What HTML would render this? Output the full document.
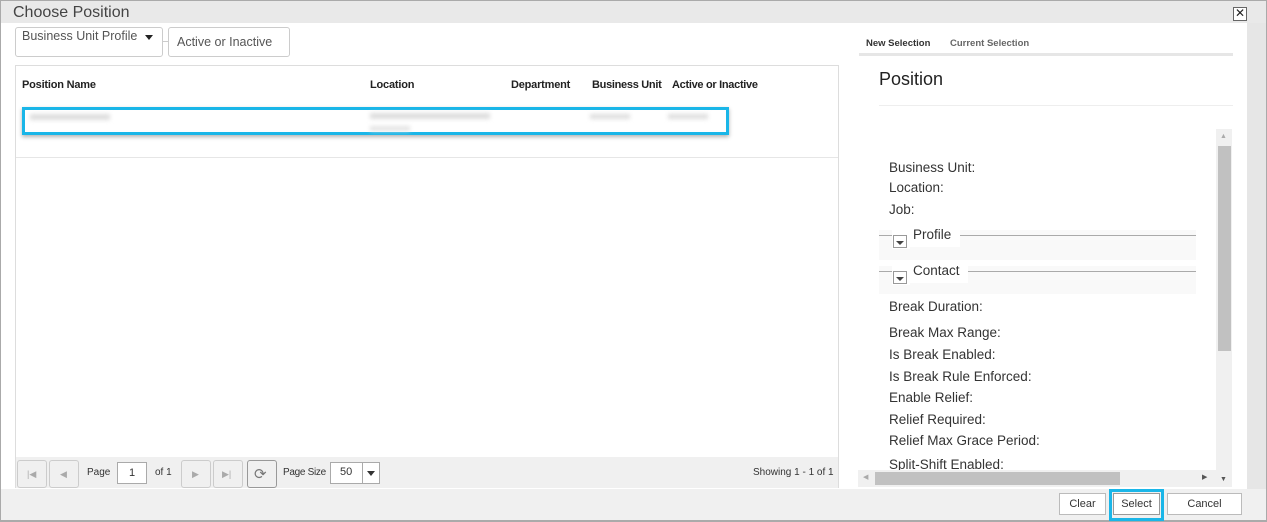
<!DOCTYPE html>
<html><head><style>
*{box-sizing:border-box;margin:0;padding:0}
body{width:1267px;height:522px;overflow:hidden;background:#f0f0f0;font-family:"Liberation Sans",sans-serif;position:relative;color:#333}
.a{position:absolute}
.lbl{position:absolute;left:889px;font-size:13.5px;color:#333}
.btn{position:absolute;border:1px solid #bbb;background:#fff;font-size:11px;text-align:center;line-height:20px;color:#333}
.pb{position:absolute;top:460px;width:30px;height:28px;border:1px solid #ccc;border-radius:3px;background:#f0f0f0}
</style></head><body>
<div class="a" style="left:0;top:0;width:1267px;height:522px;border:1px solid #aaa;border-bottom:2px solid #aaa"></div>
<div class="a" style="left:1px;top:1px;width:1265px;height:22px;background:#e9e9e9"></div>
<div class="a" style="left:13px;top:4px;font-size:16px;color:#444">Choose Position</div>
<div class="a" style="left:1233px;top:7px;width:14px;height:14px;border:1px solid #666;background:#fff;font-size:12px;line-height:11px;text-align:center;color:#222">✕</div>
<div class="a" style="left:1px;top:23px;width:1246px;height:466px;background:#fff"></div>
<div class="a" style="left:1247px;top:23px;width:19px;height:466px;background:#e6e6e6"></div>

<div class="a" style="left:15px;top:27px;width:148px;height:30px;border:1px solid #ccc;border-radius:3px"></div>
<div class="a" style="left:22px;top:29px;font-size:12.5px;color:#555">Business Unit Profile</div>
<div class="a" style="left:145px;top:35px;border-left:4px solid transparent;border-right:4px solid transparent;border-top:5px solid #222"></div>
<div class="a" style="left:163px;top:41px;width:6px;border-top:1px solid #ccc"></div>
<div class="a" style="left:168px;top:27px;width:122px;height:30px;border:1px solid #ccc;border-radius:3px"></div>
<div class="a" style="left:177px;top:35px;font-size:12.5px;color:#555">Active or Inactive</div>

<div class="a" style="left:15px;top:65px;width:824px;height:423px;border:1px solid #ddd;background:#fff"></div>
<div class="a" style="left:22px;top:79px;font-size:11px;font-weight:bold;color:#222;letter-spacing:-0.2px">Position Name</div>
<div class="a" style="left:370px;top:79px;font-size:11px;font-weight:bold;color:#222;letter-spacing:-0.2px">Location</div>
<div class="a" style="left:511px;top:79px;font-size:11px;font-weight:bold;color:#222;letter-spacing:-0.2px">Department</div>
<div class="a" style="left:592px;top:79px;font-size:11px;font-weight:bold;color:#222;letter-spacing:-0.3px">Business Unit</div>
<div class="a" style="left:672px;top:79px;font-size:11px;font-weight:bold;color:#222;letter-spacing:-0.3px">Active or Inactive</div>
<div class="a" style="left:16px;top:157px;width:822px;border-top:1px solid #e6e6e6"></div>
<div class="a" style="left:22px;top:107px;width:707px;height:28px;border:3px solid #1ab6e8;box-shadow:0 2px 4px rgba(0,0,0,.3)"></div>
<div class="a" style="left:30px;top:114px;width:80px;height:6px;background:#ddd;filter:blur(2px)"></div>
<div class="a" style="left:370px;top:113px;width:120px;height:6px;background:#ddd;filter:blur(2px)"></div>
<div class="a" style="left:370px;top:126px;width:40px;height:5px;background:#e3e3e3;filter:blur(2px)"></div>
<div class="a" style="left:590px;top:114px;width:40px;height:5px;background:#ddd;filter:blur(2px)"></div>
<div class="a" style="left:668px;top:114px;width:40px;height:5px;background:#ddd;filter:blur(2px)"></div>

<div class="a" style="left:16px;top:457px;width:822px;height:31px;background:#f0f0f0"></div>
<div class="pb" style="left:17px"><span class="a" style="left:9px;top:8px;font-size:9px;color:#aaa">|◀</span></div>
<div class="pb" style="left:49px"><span class="a" style="left:10px;top:8px;font-size:9px;color:#aaa">◀</span></div>
<div class="a" style="left:87px;top:467px;font-size:10px;color:#333">Page</div>
<div class="a" style="left:117px;top:462px;width:30px;height:22px;border:1px solid #aaa;background:#fff;font-size:11px;text-align:center;line-height:20px">1</div>
<div class="a" style="left:155px;top:467px;font-size:10px;color:#333">of 1</div>
<div class="pb" style="left:181px"><span class="a" style="left:10px;top:8px;font-size:9px;color:#aaa">▶</span></div>
<div class="pb" style="left:213px"><span class="a" style="left:8px;top:8px;font-size:9px;color:#aaa">▶|</span></div>
<div class="pb" style="left:247px;border-color:#999"><span class="a" style="left:6px;top:4px;font-size:15px;color:#777">⟳</span></div>
<div class="a" style="left:283px;top:467px;font-size:10px;color:#333;letter-spacing:-0.3px">Page Size</div>
<div class="a" style="left:330px;top:462px;width:50px;height:22px;border:1px solid #aaa;background:#fff"></div>
<div class="a" style="left:362px;top:462px;width:1px;height:22px;background:#aaa"></div>
<div class="a" style="left:340px;top:466px;font-size:11px">50</div>
<div class="a" style="left:367px;top:471px;border-left:4px solid transparent;border-right:4px solid transparent;border-top:5px solid #333"></div>
<div class="a" style="left:753px;top:467px;font-size:10px;color:#333">Showing 1 - 1 of 1</div>

<div class="a" style="left:866px;top:38px;font-size:9.5px;font-weight:bold;color:#333">New Selection</div>
<div class="a" style="left:950px;top:38px;font-size:9.5px;font-weight:bold;color:#666">Current Selection</div>
<div class="a" style="left:859px;top:53px;width:374px;height:3px;background:#e6e6e6"></div>
<div class="a" style="left:879px;top:69px;font-size:18px;color:#222">Position</div>
<div class="a" style="left:879px;top:105px;width:354px;border-top:1px solid #eee"></div>

<div class="a" style="left:1216px;top:129px;width:16px;height:358px;background:#f0f0f0"></div>
<div class="a" style="left:1218px;top:146px;width:13px;height:205px;background:#c1c1c1"></div>
<div class="a" style="left:1220px;top:133px;font-size:7px;color:#aaa">▲</div>
<div class="a" style="left:1220px;top:476px;font-size:7px;color:#555">▼</div>
<div class="a" style="left:858px;top:470px;width:358px;height:17px;background:#f0f0f0"></div>
<div class="a" style="left:875px;top:472px;width:245px;height:13px;background:#c1c1c1"></div>
<div class="a" style="left:863px;top:473px;font-size:7px;color:#aaa">◀</div>
<div class="a" style="left:1202px;top:473px;font-size:7px;color:#555">▶</div>

<div class="lbl" style="top:160px">Business Unit:</div>
<div class="lbl" style="top:180px">Location:</div>
<div class="lbl" style="top:202px">Job:</div>
<div class="a" style="left:879px;top:230px;width:317px;height:30px;background:#f9f9f9"></div>
<div class="a" style="left:879px;top:235px;width:317px;border-top:1px solid #aaa"></div>
<div class="a" style="left:892px;top:227px;width:18px;height:22px;background:#fff"></div>
<div class="a" style="left:893px;top:235px;width:14px;height:13px;border:1px solid #999;background:#fff"></div>
<div class="a" style="left:896px;top:241px;border-left:4px solid transparent;border-right:4px solid transparent;border-top:4px solid #444"></div>
<div class="a" style="left:910px;top:227px;width:50px;height:20px;background:#fff;font-size:13.5px;padding-left:3px">Profile</div>
<div class="a" style="left:879px;top:266px;width:317px;height:28px;background:#f9f9f9"></div>
<div class="a" style="left:879px;top:271px;width:317px;border-top:1px solid #aaa"></div>
<div class="a" style="left:892px;top:263px;width:18px;height:22px;background:#fff"></div>
<div class="a" style="left:893px;top:271px;width:14px;height:13px;border:1px solid #999;background:#fff"></div>
<div class="a" style="left:896px;top:277px;border-left:4px solid transparent;border-right:4px solid transparent;border-top:4px solid #444"></div>
<div class="a" style="left:910px;top:263px;width:58px;height:20px;background:#fff;font-size:13.5px;padding-left:3px">Contact</div>
<div class="lbl" style="top:299px">Break Duration:</div>
<div class="lbl" style="top:325px">Break Max Range:</div>
<div class="lbl" style="top:347px">Is Break Enabled:</div>
<div class="lbl" style="top:369px">Is Break Rule Enforced:</div>
<div class="lbl" style="top:390px">Enable Relief:</div>
<div class="lbl" style="top:412px">Relief Required:</div>
<div class="lbl" style="top:433px">Relief Max Grace Period:</div>
<div class="lbl" style="top:457px;height:13px;overflow:hidden">Split-Shift Enabled:</div>

<div class="btn" style="left:1059px;top:493px;width:47px;height:22px">Clear</div>
<div class="a" style="left:1109px;top:489px;width:55px;height:32px;border:3px solid #1ab6e8"></div>
<div class="btn" style="left:1113px;top:493px;width:47px;height:22px;border-color:#999">Select</div>
<div class="btn" style="left:1167px;top:493px;width:75px;height:22px">Cancel</div>
</body></html>
